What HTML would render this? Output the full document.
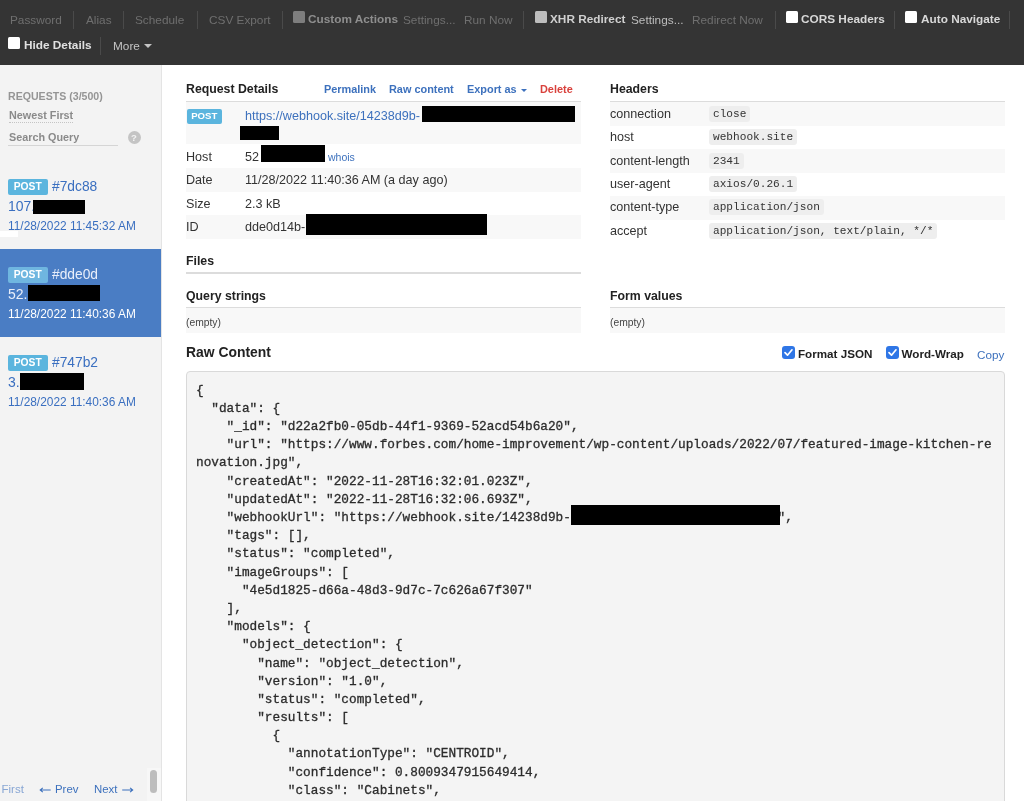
<!DOCTYPE html>
<html><head><meta charset="utf-8">
<style>
*{box-sizing:border-box;margin:0;padding:0}
html,body{width:1024px;height:801px;overflow:hidden;background:#fff}
body{font-family:"Liberation Sans",sans-serif;font-size:11.8px;color:#333;position:relative;filter:blur(0.4px)}
.a{position:absolute;white-space:nowrap;line-height:1}
#top{position:absolute;left:0;top:0;width:1024px;height:65px;background:#343434}
#top .t{position:absolute;white-space:nowrap;line-height:14px;font-size:11.8px;color:#6f6f6f}
#top .sep{position:absolute;width:1px;height:18px;background:#4a4a4a}
#top .cb{position:absolute;width:12px;height:12px;border-radius:1.5px;background:#fff}
#side{position:absolute;left:0;top:65px;width:162px;height:736px;background:#f3f3f3;border-right:1px solid #e4e4e4}
.badge{position:absolute;background:#5bb5de;color:#fff;font-weight:bold;font-size:10.3px;line-height:16.5px;height:16.5px;width:39.5px;text-align:center;border-radius:2px}
.blk{position:absolute;background:#000}
.blue{color:#3a6fc0}
.h{position:absolute;font-weight:bold;font-size:12.3px;line-height:14px;color:#222;white-space:nowrap}
.hr{position:absolute;height:2px;background:#dcdcdc}
.row{position:absolute;background:#f8f8f8}
.lbl{position:absolute;font-size:12.6px;line-height:14px;color:#333;white-space:nowrap}
.lnk{position:absolute;font-size:10.9px;font-weight:bold;line-height:13px;color:#3d71bd;white-space:nowrap}
code{position:absolute;font-family:"Liberation Mono",monospace;font-size:11.13px;line-height:16px;height:16px;background:#eee;color:#333;padding:0 4px;border-radius:3px;white-space:nowrap}
pre{position:absolute;left:186px;top:371px;width:819px;height:440px;background:#f4f4f4;border:1px solid #d9d9d9;border-radius:4px;font-family:"Liberation Mono",monospace;font-size:12.76px;line-height:18.18px;color:#2c2c2c;-webkit-text-stroke:0.3px #2c2c2c;padding:9.7px 0 0 9px;white-space:pre;overflow:hidden}
.caret{display:inline-block;width:0;height:0;border-style:solid;border-width:4px 4px 0 4px;border-color:#3d71bd transparent transparent transparent;vertical-align:2px;margin-left:1px}
</style></head><body>
<div id="top">
 <div class="t" style="left:10px;top:13px">Password</div><div class="sep" style="left:73px;top:11px"></div>
 <div class="t" style="left:86px;top:13px">Alias</div><div class="sep" style="left:123px;top:11px"></div>
 <div class="t" style="left:135px;top:13px">Schedule</div><div class="sep" style="left:197px;top:11px"></div>
 <div class="t" style="left:209px;top:13px">CSV Export</div><div class="sep" style="left:282px;top:11px"></div>
 <div class="cb" style="left:293px;top:11px;background:#7e7e7e"></div>
 <div class="t" style="left:308px;top:12px;font-weight:bold;color:#8e8e8e">Custom Actions</div>
 <div class="t" style="left:403px;top:13px">Settings...</div>
 <div class="t" style="left:464px;top:13px">Run Now</div><div class="sep" style="left:523px;top:11px"></div>
 <div class="cb" style="left:535px;top:11px;background:#bdbdbd"></div>
 <div class="t" style="left:550px;top:12px;font-weight:bold;color:#d0d0d0">XHR Redirect</div>
 <div class="t" style="left:631px;top:13px;color:#bdbdbd">Settings...</div>
 <div class="t" style="left:692px;top:13px">Redirect Now</div><div class="sep" style="left:775px;top:11px"></div>
 <div class="cb" style="left:786px;top:11px"></div>
 <div class="t" style="left:801px;top:12px;font-weight:bold;color:#d8d8d8">CORS Headers</div><div class="sep" style="left:894px;top:11px"></div>
 <div class="cb" style="left:905px;top:11px"></div>
 <div class="t" style="left:921px;top:12px;font-weight:bold;color:#d8d8d8">Auto Navigate</div><div class="sep" style="left:1009px;top:11px"></div>
 <div class="cb" style="left:8px;top:37px"></div>
 <div class="t" style="left:24px;top:38px;font-weight:bold;color:#e0e0e0">Hide Details</div><div class="sep" style="left:100px;top:37px"></div>
 <div class="t" style="left:113px;top:39px;color:#c4c4c4">More <span class="caret" style="border-top-color:#c4c4c4"></span></div>
</div>

<div id="side"></div>
<div class="a" style="left:8px;top:91px;font-size:10.6px;font-weight:bold;color:#959595">REQUESTS (3/500)</div>
<div class="a" style="left:9px;top:110px;font-size:10.8px;font-weight:bold;color:#8a8a8a;border-bottom:1px dotted #c4c4c4;padding-bottom:1px">Newest First</div>
<div class="a" style="left:9px;top:132px;font-size:10.8px;font-weight:bold;color:#8a8a8a">Search Query</div>
<div class="a" style="left:8px;top:145px;width:110px;height:1px;background:#d5d5d5"></div>
<div class="a" style="left:127.5px;top:131px;width:13px;height:13px;border-radius:6.5px;background:#c4c4c4;color:#f3f3f3;font-size:9.5px;font-weight:bold;text-align:center;line-height:13px">?</div>

<div class="badge" style="left:8px;top:178.5px">POST</div>
<div class="a blue" style="left:52px;top:179.8px;font-size:13.8px">#7dc88</div>
<div class="a blue" style="left:8px;top:199px;font-size:14px">107.</div>
<div class="blk" style="left:33px;top:200px;width:52px;height:14px"></div>
<div class="a blue" style="left:8px;top:220.7px;font-size:11.9px">11/28/2022 11:45:32 AM</div>
<div class="a" style="left:0;top:231px;width:18px;height:6px;background:#fff"></div>

<div class="a" style="left:0;top:249px;width:161px;height:88px;background:#4a7dc4"></div>
<div class="badge" style="left:8px;top:266.5px;background:#6fb6e0">POST</div>
<div class="a" style="left:52px;top:267.8px;font-size:13.8px;color:#e8eefa">#dde0d</div>
<div class="a" style="left:8px;top:287px;font-size:14px;color:#e8eefa">52.</div>
<div class="blk" style="left:28px;top:285px;width:72px;height:16px"></div>
<div class="a" style="left:8px;top:308.7px;font-size:11.9px;color:#fff">11/28/2022 11:40:36 AM</div>

<div class="badge" style="left:8px;top:354.5px">POST</div>
<div class="a blue" style="left:52px;top:355.8px;font-size:13.8px">#747b2</div>
<div class="a blue" style="left:8px;top:375px;font-size:14px">3.</div>
<div class="blk" style="left:20px;top:373px;width:64px;height:17px"></div>
<div class="a blue" style="left:8px;top:396.7px;font-size:11.9px">11/28/2022 11:40:36 AM</div>

<div class="a" style="left:147px;top:768px;width:14px;height:33px;background:#f7f7f7"></div>
<div class="a" style="left:150px;top:770px;width:7px;height:23px;border-radius:4px;background:#bdbdbd"></div>
<div class="a" style="left:1.5px;top:784px;font-size:11.5px;color:#88a6d4">First</div>
<svg class="a" style="left:39px;top:785px" width="14" height="10" viewBox="0 0 14 10"><path d="M1.2 5 H11.7 M3.8 2.8 L1.2 5 L3.8 7.2" fill="none" stroke="#3d71bd" stroke-width="1.1"/></svg>
<div class="a" style="left:55px;top:784px;font-size:11.4px;color:#3d71bd">Prev</div>
<div class="a" style="left:94px;top:784px;font-size:11.4px;color:#3d71bd">Next</div>
<svg class="a" style="left:121px;top:785px" width="14" height="10" viewBox="0 0 14 10"><path d="M1.2 5 H11.7 M9.1 2.8 L11.7 5 L9.1 7.2" fill="none" stroke="#3d71bd" stroke-width="1.1"/></svg>

<!-- Request details -->
<div class="h" style="left:186px;top:82px">Request Details</div>
<div class="lnk" style="left:324px;top:83px">Permalink</div>
<div class="lnk" style="left:389px;top:83px">Raw content</div>
<div class="lnk" style="left:467px;top:83px">Export as <span class="caret" style="border-width:3.5px 3.5px 0 3.5px;vertical-align:1px"></span></div>
<div class="lnk" style="left:540px;top:83px;color:#d9413c">Delete</div>
<div class="hr" style="left:186px;top:101px;width:395px"></div>
<div class="row" style="left:186px;top:102px;width:395px;height:42px"></div>
<div class="badge" style="left:186.5px;top:109px;width:35.5px;height:14.5px;line-height:14.5px;font-size:9.6px">POST</div>
<div class="lbl" style="left:245px;top:109px;color:#3d71bd">https://webhook.site/14238d9b-</div>
<div class="blk" style="left:422px;top:106px;width:153px;height:16px"></div>
<div class="blk" style="left:240px;top:126px;width:39px;height:14px"></div>
<div class="lbl" style="left:186px;top:150px">Host</div>
<div class="lbl" style="left:245px;top:150px">52</div>
<div class="blk" style="left:260.5px;top:144.7px;width:64.5px;height:17.6px"></div>
<div class="lnk" style="left:328px;top:151px;font-weight:normal;font-size:10.5px">whois</div>
<div class="row" style="left:186px;top:168px;width:395px;height:24px"></div>
<div class="lbl" style="left:186px;top:173px">Date</div>
<div class="lbl" style="left:245px;top:173px">11/28/2022 11:40:36 AM (a day ago)</div>
<div class="lbl" style="left:186px;top:197px">Size</div>
<div class="lbl" style="left:245px;top:197px">2.3 kB</div>
<div class="row" style="left:186px;top:215px;width:395px;height:24px"></div>
<div class="lbl" style="left:186px;top:220px">ID</div>
<div class="lbl" style="left:245px;top:220px">dde0d14b-</div>
<div class="blk" style="left:306px;top:214px;width:181px;height:21px"></div>

<div class="h" style="left:186px;top:254px">Files</div>
<div class="hr" style="left:186px;top:272px;width:395px"></div>
<div class="h" style="left:186px;top:289px">Query strings</div>
<div class="hr" style="left:186px;top:307px;width:395px"></div>
<div class="row" style="left:186px;top:308px;width:395px;height:25px"></div>
<div class="a" style="left:186px;top:317.5px;font-size:10.3px;color:#444">(empty)</div>

<!-- Headers -->
<div class="h" style="left:610px;top:82px">Headers</div>
<div class="hr" style="left:610px;top:101px;width:395px"></div>
<div class="row" style="left:610px;top:102px;width:395px;height:24px"></div>
<div class="lbl" style="left:610px;top:107px">connection</div><code style="left:709px;top:106px">close</code>
<div class="lbl" style="left:610px;top:130px">host</div><code style="left:709px;top:129px">webhook.site</code>
<div class="row" style="left:610px;top:149px;width:395px;height:24px"></div>
<div class="lbl" style="left:610px;top:154px">content-length</div><code style="left:709px;top:153px">2341</code>
<div class="lbl" style="left:610px;top:177px">user-agent</div><code style="left:709px;top:176px">axios/0.26.1</code>
<div class="row" style="left:610px;top:196px;width:395px;height:24px"></div>
<div class="lbl" style="left:610px;top:200px">content-type</div><code style="left:709px;top:199px">application/json</code>
<div class="lbl" style="left:610px;top:224px">accept</div><code style="left:709px;top:223px">application/json, text/plain, */*</code>

<div class="h" style="left:610px;top:289px">Form values</div>
<div class="hr" style="left:610px;top:307px;width:395px"></div>
<div class="row" style="left:610px;top:308px;width:395px;height:25px"></div>
<div class="a" style="left:610px;top:317.5px;font-size:10.3px;color:#444">(empty)</div>

<!-- Raw content -->
<div class="h" style="left:186px;top:345px;font-size:13.9px">Raw Content</div>
<div class="a" style="left:781.5px;top:345.5px;width:13px;height:13px;border-radius:3px;background:#2f76e6"></div>
<svg class="a" style="left:781.5px;top:345.5px" width="13" height="13" viewBox="0 0 13 13"><path d="M3 6.7 L5.5 9.2 L10 3.8" fill="none" stroke="#fff" stroke-width="1.7" stroke-linecap="round" stroke-linejoin="round"/></svg>
<div class="a" style="left:798px;top:348px;font-size:11.65px;font-weight:bold;color:#222">Format JSON</div>
<div class="a" style="left:885.5px;top:345.5px;width:13px;height:13px;border-radius:3px;background:#2f76e6"></div>
<svg class="a" style="left:885.5px;top:345.5px" width="13" height="13" viewBox="0 0 13 13"><path d="M3 6.7 L5.5 9.2 L10 3.8" fill="none" stroke="#fff" stroke-width="1.7" stroke-linecap="round" stroke-linejoin="round"/></svg>
<div class="a" style="left:901.5px;top:348px;font-size:11.65px;font-weight:bold;color:#222">Word-Wrap</div>
<div class="a" style="left:977px;top:348.5px;font-size:11.7px;color:#3d71bd">Copy</div>

<div class="blk" style="left:570.5px;top:505px;width:209.5px;height:20px;z-index:5"></div>
<pre>{
  "data": {
    "_id": "d22a2fb0-05db-44f1-9369-52acd54b6a20",
    "url": "https://www.forbes.com/home-improvement/wp-content/uploads/2022/07/featured-image-kitchen-re
novation.jpg",
    "createdAt": "2022-11-28T16:32:01.023Z",
    "updatedAt": "2022-11-28T16:32:06.693Z",
    "webhookUrl": "https://webhook.site/14238d9b-                           ",
    "tags": [],
    "status": "completed",
    "imageGroups": [
      "4e5d1825-d66a-48d3-9d7c-7c626a67f307"
    ],
    "models": {
      "object_detection": {
        "name": "object_detection",
        "version": "1.0",
        "status": "completed",
        "results": [
          {
            "annotationType": "CENTROID",
            "confidence": 0.8009347915649414,
            "class": "Cabinets",
</pre>
</body></html>
